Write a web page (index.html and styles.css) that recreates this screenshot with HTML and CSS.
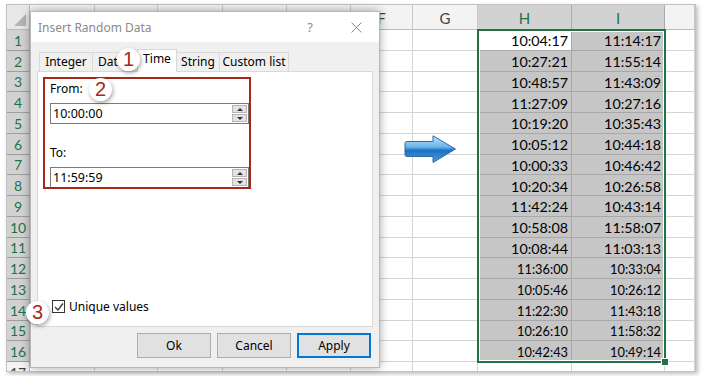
FILE: index.html
```html
<!DOCTYPE html>
<html lang="en">
<head>
  <meta charset="UTF-8" />
  <title>Insert Random Data - Time</title>
  <link rel="stylesheet" href="styles.css">
</head>
<body>
  <div class="sheet">
    <div class="grid">
      <!-- column headers -->
      <div class="corner"><span class="corner-mark"></span></div>
      <div class="hd">A</div><div class="hd">B</div><div class="hd">C</div><div class="hd">D</div><div class="hd">E</div>
      <div class="hd">F</div><div class="hd">G</div><div class="hd sel">H</div><div class="hd sel">I</div><div class="hd"></div>

      <div class="rh sel">1</div><div class="cell"></div><div class="cell"></div><div class="cell"></div><div class="cell"></div><div class="cell"></div><div class="cell"></div><div class="cell"></div><div class="cell pick active">10:04:17</div><div class="cell pick">11:14:17</div><div class="cell"></div>
      <div class="rh sel">2</div><div class="cell"></div><div class="cell"></div><div class="cell"></div><div class="cell"></div><div class="cell"></div><div class="cell"></div><div class="cell"></div><div class="cell pick">10:27:21</div><div class="cell pick">11:55:14</div><div class="cell"></div>
      <div class="rh sel">3</div><div class="cell"></div><div class="cell"></div><div class="cell"></div><div class="cell"></div><div class="cell"></div><div class="cell"></div><div class="cell"></div><div class="cell pick">10:48:57</div><div class="cell pick">11:43:09</div><div class="cell"></div>
      <div class="rh sel">4</div><div class="cell"></div><div class="cell"></div><div class="cell"></div><div class="cell"></div><div class="cell"></div><div class="cell"></div><div class="cell"></div><div class="cell pick">11:27:09</div><div class="cell pick">10:27:16</div><div class="cell"></div>
      <div class="rh sel">5</div><div class="cell"></div><div class="cell"></div><div class="cell"></div><div class="cell"></div><div class="cell"></div><div class="cell"></div><div class="cell"></div><div class="cell pick">10:19:20</div><div class="cell pick">10:35:43</div><div class="cell"></div>
      <div class="rh sel">6</div><div class="cell"></div><div class="cell"></div><div class="cell"></div><div class="cell"></div><div class="cell"></div><div class="cell"></div><div class="cell"></div><div class="cell pick">10:05:12</div><div class="cell pick">10:44:18</div><div class="cell"></div>
      <div class="rh sel">7</div><div class="cell"></div><div class="cell"></div><div class="cell"></div><div class="cell"></div><div class="cell"></div><div class="cell"></div><div class="cell"></div><div class="cell pick">10:00:33</div><div class="cell pick">10:46:42</div><div class="cell"></div>
      <div class="rh sel">8</div><div class="cell"></div><div class="cell"></div><div class="cell"></div><div class="cell"></div><div class="cell"></div><div class="cell"></div><div class="cell"></div><div class="cell pick">10:20:34</div><div class="cell pick">10:26:58</div><div class="cell"></div>
      <div class="rh sel">9</div><div class="cell"></div><div class="cell"></div><div class="cell"></div><div class="cell"></div><div class="cell"></div><div class="cell"></div><div class="cell"></div><div class="cell pick">11:42:24</div><div class="cell pick">10:43:14</div><div class="cell"></div>
      <div class="rh sel">10</div><div class="cell"></div><div class="cell"></div><div class="cell"></div><div class="cell"></div><div class="cell"></div><div class="cell"></div><div class="cell"></div><div class="cell pick">10:58:08</div><div class="cell pick">11:58:07</div><div class="cell"></div>
      <div class="rh sel">11</div><div class="cell"></div><div class="cell"></div><div class="cell"></div><div class="cell"></div><div class="cell"></div><div class="cell"></div><div class="cell"></div><div class="cell pick">10:08:44</div><div class="cell pick">11:03:13</div><div class="cell"></div>
      <div class="rh sel">12</div><div class="cell"></div><div class="cell"></div><div class="cell"></div><div class="cell"></div><div class="cell"></div><div class="cell"></div><div class="cell"></div><div class="cell pick sm">11:36:00</div><div class="cell pick sm">10:33:04</div><div class="cell"></div>
      <div class="rh sel">13</div><div class="cell"></div><div class="cell"></div><div class="cell"></div><div class="cell"></div><div class="cell"></div><div class="cell"></div><div class="cell"></div><div class="cell pick sm">10:05:46</div><div class="cell pick sm">10:26:12</div><div class="cell"></div>
      <div class="rh sel">14</div><div class="cell"></div><div class="cell"></div><div class="cell"></div><div class="cell"></div><div class="cell"></div><div class="cell"></div><div class="cell"></div><div class="cell pick sm">11:22:30</div><div class="cell pick sm">11:43:18</div><div class="cell"></div>
      <div class="rh sel">15</div><div class="cell"></div><div class="cell"></div><div class="cell"></div><div class="cell"></div><div class="cell"></div><div class="cell"></div><div class="cell"></div><div class="cell pick sm">10:26:10</div><div class="cell pick sm">11:58:32</div><div class="cell"></div>
      <div class="rh sel">16</div><div class="cell"></div><div class="cell"></div><div class="cell"></div><div class="cell"></div><div class="cell"></div><div class="cell"></div><div class="cell"></div><div class="cell pick sm">10:42:43</div><div class="cell pick sm">10:49:14</div><div class="cell"></div>
      <div class="rh">17</div><div class="cell"></div><div class="cell"></div><div class="cell"></div><div class="cell"></div><div class="cell"></div><div class="cell"></div><div class="cell"></div><div class="cell"></div><div class="cell"></div><div class="cell"></div>
    </div>

    <!-- selection outline H1:I16 -->
    <div class="selection"><span class="fill-handle"></span></div>

    <svg class="arrow" width="53" height="29" viewBox="0 0 53 29">
      <defs>
        <linearGradient id="arrowFill" x1="0" y1="0" x2="0" y2="1">
          <stop offset="0" stop-color="#c4e6fc"/>
          <stop offset="0.42" stop-color="#66b3ea"/>
          <stop offset="0.55" stop-color="#1d6fc2"/>
          <stop offset="1" stop-color="#4f9fe2"/>
        </linearGradient>
      </defs>
      <path d="M3 6.5 H29 V0.8 L51.5 14 L29 27.5 V21.5 H3 Q1 21.5 1 19.5 V8.5 Q1 6.5 3 6.5 Z" fill="url(#arrowFill)" stroke="#2d6aa6" stroke-width="1"/>
    </svg>
  </div>

  <div class="dialog">
    <div class="dialog-title">
      <span class="dialog-name">Insert Random Data</span>
      <span class="title-btn">?</span>
      <span class="title-btn">
        <svg width="11" height="11" viewBox="0 0 11 11"><path d="M0.5 0.5 L10.5 10.5 M10.5 0.5 L0.5 10.5" stroke="#8a8a8a" stroke-width="1"/></svg>
      </span>
    </div>

    <div class="dialog-body">
      <div class="tabs">
        <span class="tab tab-integer">Integer</span>
        <span class="tab tab-date">Date</span>
        <span class="tab tab-time active">Time</span>
        <span class="tab tab-string">String</span>
        <span class="tab tab-custom">Custom list</span>
      </div>

      <div class="panel">
        <div class="range-box">
          <div class="field-label">From:</div>
          <div class="spin-input">
            <span class="spin-value">10:00:00</span>
            <span class="spinner"><span class="spin-up"></span><span class="spin-down"></span></span>
          </div>
          <div class="field-label field-to">To:</div>
          <div class="spin-input spin-last">
            <span class="spin-value">11:59:59</span>
            <span class="spinner"><span class="spin-up"></span><span class="spin-down"></span></span>
          </div>
        </div>

        <label class="check-row">
          <span class="checkbox">
            <svg width="10" height="10" viewBox="0 0 10 10"><path d="M1 5 L4 8 L9 1.5" fill="none" stroke="#333" stroke-width="1.3"/></svg>
          </span>
          Unique values
        </label>
      </div>

      <div class="buttons">
        <button class="btn">Ok</button>
        <button class="btn">Cancel</button>
        <button class="btn btn-default">Apply</button>
      </div>
    </div>

    <span class="badge badge-1">1</span>
    <span class="badge badge-2">2</span>
    <span class="badge badge-3">3</span>
  </div>
</body>
</html>
```

FILE: styles.css
```css
body {
  margin: 0;
  position: relative;
  width: 703px;
  height: 376px;
  background-color: #ffffff;
  font-family: 'Noto Sans', 'Liberation Sans', sans-serif;
  overflow: hidden;
}

/* ---------- spreadsheet ---------- */

.sheet {
  position: relative;
  margin: 4px 0 0 6px;
  width: 688px;
  height: 366px;
  border: 1px solid #c2c2c2;
  box-shadow: 2px 2px 4px rgba(0, 0, 0, 0.25);
  overflow: hidden;
  background: #ffffff;
}

.grid {
  display: grid;
  grid-template-columns: 23px 65px 63px 65px 64px 64px 62px 65px 94px 93px 30px;
  grid-template-rows: 25px;
  grid-auto-rows: 20.75px;
  font-family: Lato, 'Liberation Sans', sans-serif;
}

.grid > div {
  box-sizing: border-box;
}

.corner {
  position: relative;
  background-color: #e8e8e8;
  border-right: 1px solid #bcbcbc;
  border-bottom: 1px solid #bcbcbc;
}

.corner-mark {
  position: absolute;
  right: 3px;
  bottom: 3px;
  width: 0;
  height: 0;
  border-left: 12px solid transparent;
  border-bottom: 12px solid #b4b4b4;
}

.hd {
  background-color: #f3f3f3;
  border-right: 1px solid #c9c9c9;
  border-bottom: 1px solid #bcbcbc;
  color: #444;
  font-size: 15px;
  display: flex;
  align-items: center;
  justify-content: center;
  padding-top: 1px;
}

.hd.sel {
  background-color: #d2d2d2;
  border-right-color: #ababab;
  color: #217346;
}

.rh {
  background-color: #f3f3f3;
  border-right: 1px solid #bcbcbc;
  border-bottom: 1px solid #c9c9c9;
  color: #444;
  font-size: 14px;
  display: flex;
  align-items: center;
  justify-content: center;
  padding-top: 1px;
}

.rh.sel {
  background-color: #d2d2d2;
  border-bottom-color: #9e9e9e;
  color: #217346;
}

.cell {
  border-right: 1px solid #d4d4d4;
  border-bottom: 1px solid #d4d4d4;
  font-size: 14.3px;
  color: #000;
  display: flex;
  align-items: center;
  justify-content: flex-end;
  padding: 2px 3px 0 0;
}

.cell.pick {
  background-color: #c6c6c6;
  border-right-color: #a8a8a8;
  border-bottom-color: #a8a8a8;
}

.cell.active {
  background-color: #ffffff;
}

.cell.sm {
  font-size: 12.8px;
}

.selection {
  position: absolute;
  left: 470px;
  top: 24px;
  width: 189px;
  height: 334px;
  box-sizing: border-box;
  border: 2px solid #217346;
  box-shadow: inset 0 0 0 1px #ffffff;
}

.fill-handle {
  position: absolute;
  right: -5px;
  bottom: -5px;
  width: 6px;
  height: 6px;
  background-color: #217346;
  border: 1px solid #ffffff;
}

.arrow {
  position: absolute;
  left: 397px;
  top: 130px;
}

/* ---------- dialog ---------- */

.dialog {
  position: absolute;
  left: 30px;
  top: 11px;
  width: 350px;
  height: 357px;
  box-sizing: border-box;
  background-color: #f0f0f0;
  border: 1px solid #b8b8b8;
  box-shadow: 0 0 9px rgba(0, 0, 0, 0.35);
  font-size: 12px;
  display: flex;
  flex-direction: column;
}

.dialog-title {
  height: 30px;
  background-color: #ffffff;
  display: flex;
  align-items: center;
  padding-left: 7px;
  color: #8a8a8a;
  font-size: 12px;
  flex-shrink: 0;
}

.dialog-name {
  flex-grow: 1;
}

.title-btn {
  width: 46px;
  text-align: center;
  font-size: 13px;
  display: flex;
  justify-content: center;
  align-items: center;
}

.dialog-body {
  flex-grow: 1;
  display: flex;
  flex-direction: column;
  padding: 8px 6px 0 6px;
}

.tabs {
  display: flex;
  align-items: flex-end;
  height: 22px;
  padding-left: 2px;
  position: relative;
  z-index: 2;
}

.tab {
  box-sizing: border-box;
  height: 20px;
  border: 1px solid #d9d9d9;
  border-right: none;
  background-color: #f0f0f0;
  padding-top: 0;
  text-align: center;
  color: #000;
}

.tab-integer { width: 53px; }
.tab-date { width: 45px; text-align: left; padding-left: 5px; }
.tab-time { width: 40px; }
.tab-string { width: 42px; }
.tab-custom { width: 70px; border-right: 1px solid #d9d9d9; }

.tab.active {
  height: 23px;
  background-color: #ffffff;
  border-bottom: none;
  border-right: 1px solid #d9d9d9;
  padding-top: 0;
}

.tab.active + .tab {
  border-left: none;
}

.panel {
  height: 256px;
  box-sizing: border-box;
  margin-top: -1px;
  background-color: #ffffff;
  border: 1px solid #d9d9d9;
  display: flex;
  flex-direction: column;
  padding: 5px 0 0 5px;
}

.range-box {
  width: 208px;
  box-sizing: border-box;
  border: 2px solid #a62915;
  padding: 2px 0 0 5px;
  height: 112px;
  overflow: hidden;
}

.field-label {
  height: 16px;
  line-height: 16px;
}

.field-to {
  margin-top: 21px;
}

.spin-input {
  margin-top: 6px;
  height: 21px;
  box-sizing: border-box;
  border: 1px solid #7a7a7a;
  display: flex;
  align-items: center;
  justify-content: space-between;
  padding: 0 1px 0 2px;
  font-size: 12.5px;
}

.spinner {
  width: 15px;
  height: 17px;
  display: flex;
  flex-direction: column;
  gap: 1px;
}

.spin-up,
.spin-down {
  flex: 1;
  background-color: #e3e3e3;
  border: 1px solid #b5b5b5;
  position: relative;
}

.spin-up::after,
.spin-down::after {
  content: "";
  position: absolute;
  left: 4px;
  top: 2px;
  border-left: 3px solid transparent;
  border-right: 3px solid transparent;
}

.spin-up::after {
  border-bottom: 3px solid #333;
}

.spin-down::after {
  border-top: 3px solid #333;
}

.check-row {
  margin-top: auto;
  margin-bottom: 11px;
  display: flex;
  align-items: center;
  gap: 4px;
  padding-left: 9px;
  color: #000;
}

.checkbox {
  width: 11px;
  height: 11px;
  border: 1px solid #333;
  display: flex;
  align-items: center;
  justify-content: center;
  background: #ffffff;
}

.buttons {
  display: flex;
  justify-content: flex-end;
  gap: 6px;
  margin-top: 6px;
  padding-right: 2px;
}

.btn {
  width: 74px;
  height: 25px;
  background-color: #e1e1e1;
  border: 1px solid #adadad;
  font-family: 'Noto Sans', 'Liberation Sans', sans-serif;
  font-size: 12px;
  color: #000;
  padding: 0;
}

.btn-default {
  border: 2px solid #0078d7;
}

/* ---------- numbered call-outs ---------- */

.badge {
  position: absolute;
  width: 23px;
  height: 23px;
  border-radius: 50%;
  background-color: #ffffff;
  box-shadow: 1px 2px 4px rgba(0, 0, 0, 0.35);
  color: #a8281a;
  font-family: 'Liberation Sans', sans-serif;
  font-size: 20px;
  line-height: 23px;
  text-align: center;
  z-index: 5;
}

.badge-1 { left: 86px; top: 36px; }
.badge-2 { left: 58px; top: 66px; }
.badge-3 { left: -5px; top: 289px; }
```
